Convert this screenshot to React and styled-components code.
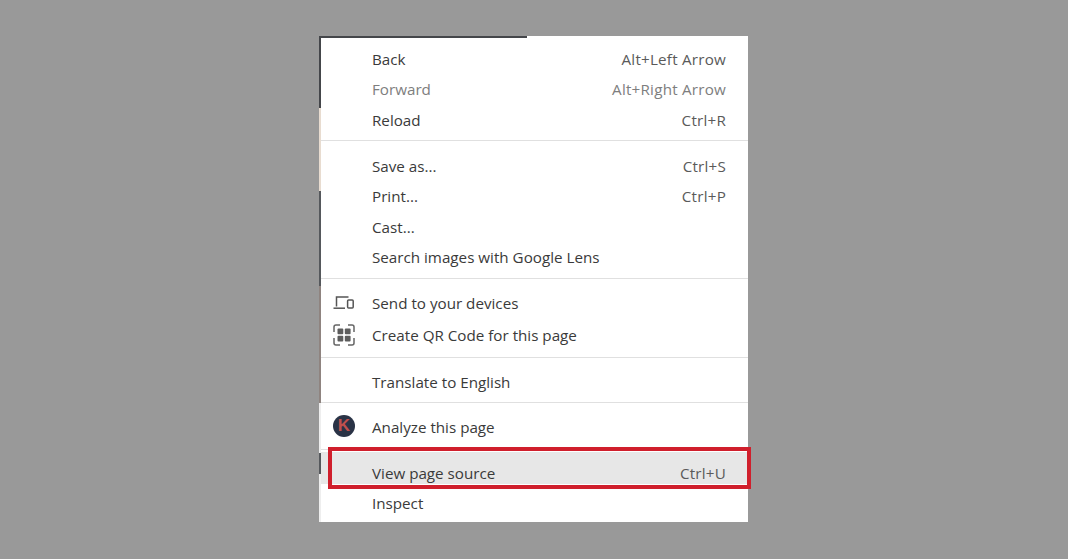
import React from "react";
import styled, { createGlobalStyle } from "styled-components";

const GlobalStyle = createGlobalStyle`
  html, body { margin: 0; padding: 0; background: #999999; }
  body { font-family: "Open Sans", "Noto Sans", sans-serif; }
`;

const Page = styled.div`
  width: 1068px;
  height: 559px;
  padding: 36px 0 0 319px;
  box-sizing: border-box;
  background: #999999;
  overflow: hidden;
`;

const Menu = styled.div`
  position: relative;
  width: 429px;
  height: 486px;
  box-sizing: border-box;
  padding: 7.5px 0 0 2px;
  background: #ffffff;
  /* dark bits of the page behind peeking out along the top and left edge */
  &::before {
    content: "";
    position: absolute;
    left: 0;
    top: 0;
    width: 208px;
    height: 1.5px;
    background: #44464a;
  }
  &::after {
    content: "";
    position: absolute;
    left: 0;
    top: 0;
    width: 1.5px;
    height: 100%;
    background: linear-gradient(
      to bottom,
      #44464a 0, #44464a 72px,
      #e8dcd0 72px, #e8dcd0 155px,
      #55585c 155px, #55585c 250px,
      #8f8480 250px, #8f8480 367px,
      #eeeeee 367px, #eeeeee 417px,
      #55585c 417px, #55585c 438px,
      #eeeeee 438px
    );
  }
`;

const Group = styled.div`
  padding-bottom: ${(p) => p.$bottom}px;
`;

const Row = styled.div`
  position: relative;
  display: flex;
  align-items: center;
  justify-content: space-between;
  height: ${(p) => p.$h}px;
  box-sizing: border-box;
  padding: ${(p) => (p.$active ? "11px" : "0")} 22px 0 51px;
  font-size: 15.2px;
  color: ${(p) => (p.$disabled ? "#7e7e7e" : "#3a3a3a")};
  background: ${(p) => (p.$active ? "#e7e7e7" : "transparent")};
`;

const Label = styled.span`
  white-space: nowrap;
`;

const Shortcut = styled.span`
  white-space: nowrap;
  letter-spacing: 0.22px;
  color: ${(p) => (p.$disabled ? "#7e7e7e" : "#5a5a5a")};
`;

const IconSlot = styled.span`
  position: absolute;
  left: 11px;
  top: 50%;
  transform: translateY(-50%);
  display: flex;
  width: 24px;
  height: 24px;
  align-items: center;
  justify-content: center;
`;

const Divider = styled.div`
  height: 1px;
  margin: 0 0 ${(p) => p.$after}px 0;
  background: #e0e0e0;
`;

const Callout = styled.div`
  position: absolute;
  left: 9px;
  top: 411px;
  width: 423px;
  height: 42px;
  box-sizing: border-box;
  border: 4px solid #d01f2c;
  z-index: 2;
`;

const DevicesIcon = () => (
  <svg width="22" height="16" viewBox="0 0 22 16" fill="none" stroke="#555" strokeWidth="1.5">
    <path d="M3.5 11.5V2h12" />
    <path d="M0.5 13.2h11.5" />
    <rect x="14.6" y="5" width="5.6" height="8" rx="1" />
  </svg>
);

const QrIcon = () => (
  <svg width="24" height="24" viewBox="0 0 24 24" fill="none">
    <path
      d="M8 2H4a2 2 0 0 0-2 2v5M16 2h4a2 2 0 0 1 2 2v5M8 22H4a2 2 0 0 1-2-2v-5M16 22h4a2 2 0 0 0 2-2v-5"
      stroke="#666"
      strokeWidth="1.5"
    />
    <rect x="5.5" y="5.5" width="5.8" height="5.8" rx="1" fill="#5c5c5c" />
    <rect x="12.8" y="5.5" width="5.8" height="5.8" rx="1" fill="#5c5c5c" />
    <rect x="5.5" y="12.8" width="5.8" height="5.8" rx="1" fill="#5c5c5c" />
    <rect x="12.8" y="12.8" width="5.8" height="5.8" rx="1" fill="#5c5c5c" />
  </svg>
);

const KBadge = styled.span`
  display: flex;
  width: 22px;
  height: 22px;
  margin-top: -2px;
  align-items: center;
  justify-content: center;
  border-radius: 50%;
  background: #2a3346;
  color: #c0504d;
  font-family: "Liberation Sans", sans-serif;
  font-size: 17px;
  font-weight: 700;
`;

const groups = [
  {
    bottom: 4.5,
    after: 10,
    rows: [
      { label: "Back", shortcut: "Alt+Left Arrow" },
      { label: "Forward", shortcut: "Alt+Right Arrow", disabled: true },
      { label: "Reload", shortcut: "Ctrl+R" },
    ],
  },
  {
    bottom: 5,
    after: 8.5,
    rows: [
      { label: "Save as...", shortcut: "Ctrl+S" },
      { label: "Print...", shortcut: "Ctrl+P" },
      { label: "Cast..." },
      { label: "Search images with Google Lens" },
    ],
  },
  {
    bottom: 5.8,
    h: 32,
    after: 8.9,
    rows: [
      { label: "Send to your devices", icon: <DevicesIcon /> },
      { label: "Create QR Code for this page", icon: <QrIcon /> },
    ],
  },
  {
    bottom: 4.5,
    after: 9.5,
    rows: [{ label: "Translate to English" }],
  },
  {
    bottom: 6,
    after: 2,
    rows: [{ label: "Analyze this page", icon: <KBadge>K</KBadge> }],
  },
  {
    bottom: 0,
    rows: [
      { label: "View page source", shortcut: "Ctrl+U", active: true, h: 32 },
      { label: "Inspect", h: 30.5, top: 4 },
    ],
  },
];

export default function App() {
  return (
    <>
      <GlobalStyle />
      <Page>
        <Menu>
          {groups.map((group, i) => (
            <React.Fragment key={i}>
              <Group $bottom={group.bottom}>
                {group.rows.map((row) => (
                  <Row
                    key={row.label}
                    $h={row.h || group.h || 30.5}
                    $disabled={row.disabled}
                    $active={row.active}
                    style={row.top ? { marginTop: row.top } : undefined}
                  >
                    {row.icon && <IconSlot>{row.icon}</IconSlot>}
                    <Label>{row.label}</Label>
                    {row.shortcut && <Shortcut $disabled={row.disabled}>{row.shortcut}</Shortcut>}
                  </Row>
                ))}
              </Group>
              {i < groups.length - 1 && <Divider $after={group.after} />}
            </React.Fragment>
          ))}
          <Callout />
        </Menu>
      </Page>
    </>
  );
}
